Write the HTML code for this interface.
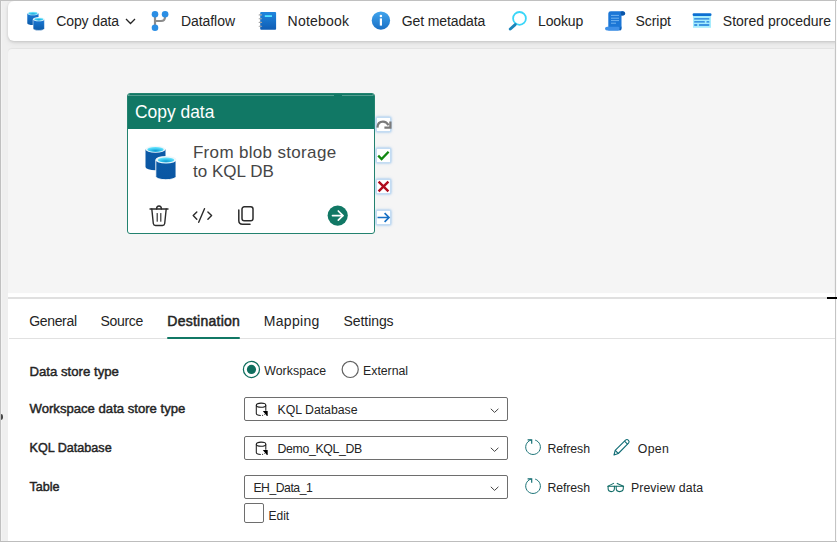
<!DOCTYPE html>
<html><head><meta charset="utf-8"><style>
html,body{margin:0;padding:0;width:837px;height:542px;overflow:hidden;background:#fff;font-family:"Liberation Sans", sans-serif;}
.t{position:absolute;white-space:nowrap;line-height:1;font-family:"Liberation Sans", sans-serif;}
svg{overflow:visible}
</style></head><body>
<div style="position:absolute;left:0px;top:0px;width:837px;height:542px;background:#efefef"></div>
<div style="position:absolute;left:1px;top:0px;width:1px;height:542px;background:#f4f4f4"></div>
<div style="position:absolute;left:8px;top:293px;width:829px;height:249px;background:#ffffff"></div>
<div style="position:absolute;left:8px;top:1px;width:840px;height:40px;background:#fff;border-radius:6px;box-shadow:0 1px 3px rgba(0,0,0,0.15),0 3px 6px rgba(0,0,0,0.05)"></div>
<div style="position:absolute;left:8px;top:49px;width:826px;height:244px;background:#f5f5f5;border-radius:4px 0 0 0;box-shadow:0 -0.5px 1px rgba(0,0,0,0.05)"></div>
<div style="position:absolute;left:8px;top:297px;width:829px;height:2px;background:#e0e0e0"></div>
<div style="position:absolute;left:9px;top:338px;width:826px;height:1px;background:#e1e1e1"></div>
<div style="position:absolute;left:0px;top:0px;width:837px;height:1px;background:#c0c0c0"></div>
<div style="position:absolute;left:0px;top:0px;width:1px;height:542px;background:#c0c0c0"></div>
<div style="position:absolute;left:835px;top:0px;width:1px;height:542px;background:#c4c4c4"></div>
<div style="position:absolute;left:836px;top:1px;width:1px;height:541px;background:#fafafa"></div>
<div style="position:absolute;left:0px;top:541px;width:837px;height:1px;background:#bdbdbd"></div>
<div style="position:absolute;left:1px;top:413.8px;width:2.4px;height:6.4px;background:#474747;border-radius:0 3px 3px 0/0 3.2px 3.2px 0"></div>
<div style="position:absolute;left:827px;top:297px;width:10px;height:2px;background:#000"></div>
<svg style="position:absolute;left:27px;top:11px;" width="18" height="20" viewBox="0 0 32 35"><defs><linearGradient id="cba" x1="0" y1="0" x2="0" y2="1"><stop offset="0" stop-color="#1a7ad8"/><stop offset="1" stop-color="#0b5aa8"/></linearGradient>
<radialGradient id="cya" cx="0.5" cy="0.75" r="0.6"><stop offset="0" stop-color="#1597cf"/><stop offset="0.55" stop-color="#35c4ee"/><stop offset="1" stop-color="#5fe0fb"/></radialGradient></defs>
<path d="M0.5 3.8 V21.5 A10 3.2 0 0 0 20.5 21.5 V3.8 Z" fill="url(#cba)"/>
<ellipse cx="10.5" cy="3.8" rx="10.1" ry="3.5" fill="#eef7fb"/>
<ellipse cx="10.5" cy="4" rx="8.2" ry="2.5" fill="url(#cya)"/>
<path d="M10.8 14.3 V31 A10 3.2 0 0 0 31 31 V14.3 Z" fill="url(#cba)" stroke="#fff" stroke-width="0.9"/>
<ellipse cx="21" cy="14.3" rx="10.5" ry="3.8" fill="#eef7fb"/>
<ellipse cx="21" cy="14.5" rx="8.2" ry="2.5" fill="url(#cya)"/></svg>
<div class="t" style="left:56.30px;top:13.95px;font-size:14px;font-weight:400;color:#242424;letter-spacing:-0.12px;">Copy data</div>
<svg style="position:absolute;left:125px;top:18px;" width="11" height="7" viewBox="0 0 11 7"><path d="M1 1 L5.5 5.5 L10 1" fill="none" stroke="#242424" stroke-width="1.3"/></svg>
<svg style="position:absolute;left:150px;top:10px;" width="20" height="22" viewBox="0 0 20 22"><path d="M5 4.5 V17.5" stroke="#8c8c8c" stroke-width="2.2" fill="none"/>
<path d="M15 4.5 V7 Q15 11 11 11 H5" stroke="#8c8c8c" stroke-width="2.2" fill="none"/>
<circle cx="5" cy="4.3" r="3.3" fill="#2b8ee4"/><circle cx="15.1" cy="4.3" r="3.3" fill="#2b8ee4"/><circle cx="5" cy="17.7" r="3.3" fill="#2b8ee4"/></svg>
<div class="t" style="left:180.90px;top:13.95px;font-size:14px;font-weight:400;color:#242424;letter-spacing:-0.05px;">Dataflow</div>
<svg style="position:absolute;left:258px;top:11px;" width="20" height="20" viewBox="0 0 20 20"><defs><linearGradient id="nb" x1="0" y1="0" x2="0" y2="1"><stop offset="0" stop-color="#1f86de"/><stop offset="1" stop-color="#0f5db5"/></linearGradient></defs>
<rect x="2.2" y="1" width="15.9" height="17.7" rx="1" fill="url(#nb)"/>
<rect x="6.8" y="4.2" width="7.2" height="1.8" fill="#54e3ff"/>
<g fill="none" stroke="#a5a5a5" stroke-width="1.1" stroke-linecap="round"><path d="M1.2 3.9 H3.6"/><path d="M1.2 7.7 H3.6"/><path d="M1.2 11.4 H3.6"/><path d="M1.2 15.2 H3.6"/></g></svg>
<div class="t" style="left:287.60px;top:13.95px;font-size:14px;font-weight:400;color:#242424;letter-spacing:0.2px;">Notebook</div>
<svg style="position:absolute;left:371px;top:11px;" width="20" height="20" viewBox="0 0 20 20"><defs><linearGradient id="inf" x1="0" y1="0" x2="0" y2="1"><stop offset="0" stop-color="#41a5ee"/><stop offset="1" stop-color="#1a6fc4"/></linearGradient></defs>
<circle cx="9.9" cy="9.6" r="9.2" fill="url(#inf)"/><circle cx="9.9" cy="5" r="1.3" fill="#fff"/><rect x="8.8" y="7.4" width="2.2" height="7.2" fill="#fff"/></svg>
<div class="t" style="left:401.80px;top:13.95px;font-size:14px;font-weight:400;color:#242424;letter-spacing:-0.12px;">Get metadata</div>
<svg style="position:absolute;left:507px;top:9px;" width="22" height="22" viewBox="0 0 22 22"><circle cx="12.5" cy="9.4" r="6.4" fill="none" stroke="#3ad6f8" stroke-width="1.8"/>
<path d="M3.3 20 L8.2 15.6" stroke="#1c86bb" stroke-width="3" stroke-linecap="round"/></svg>
<div class="t" style="left:538.00px;top:13.95px;font-size:14px;font-weight:400;color:#242424;letter-spacing:-0.15px;">Lookup</div>
<svg style="position:absolute;left:604px;top:10px;" width="22" height="22" viewBox="0 0 22 22"><path d="M4.3 3.6 Q4.3 1.2 6.8 1.2 H18.5 Q21 1.2 21 3.6 Q21 5.4 19 5.4 H17.5 V17 Q17.5 20.5 14 20.5 H4.3 Z" fill="#1b76d6"/>
<path d="M16.5 2 Q17.3 1.2 18.8 1.2 Q21.2 1.4 21.2 3.4 Q21.2 5.4 19 5.4 H17.3 Z" fill="#0a55a8"/>
<path d="M1 18.6 Q1 16.8 3.2 16.8 H14.2 Q15.8 16.8 15.8 18.6 Q15.8 20.6 14 20.6 H3 Q1 20.6 1 18.6 Z" fill="#3f90e8"/>
<path d="M15.8 17.5 Q17.5 17.5 17.5 16 V19 Q17.5 20.6 15.5 20.6 Z" fill="#0d5fb8"/>
<g stroke="#7cbaf3" stroke-width="0.9"><path d="M7 5.4 H15"/><path d="M7 8.2 H15"/><path d="M7 10.6 H15"/><path d="M7 13.2 H12"/></g></svg>
<div class="t" style="left:635.60px;top:13.95px;font-size:14px;font-weight:400;color:#242424;letter-spacing:-0.08px;">Script</div>
<svg style="position:absolute;left:692px;top:12px;" width="20" height="16" viewBox="0 0 20 16"><rect x="1" y="2" width="18" height="13.8" fill="#a6ecfd"/>
<rect x="0.6" y="1.3" width="18.9" height="2.8" rx="1.3" fill="#0b6fd2"/>
<g stroke="#1a78d8" stroke-width="1.3" stroke-linecap="round"><path d="M2.7 6.9 H16.8"/><path d="M2.7 9.9 H12.3 M15 9.9 H16.8"/><path d="M2.7 13 H4.8 M7.4 13 H16.8"/></g></svg>
<div class="t" style="left:722.80px;top:13.95px;font-size:14px;font-weight:400;color:#242424;letter-spacing:0px;">Stored procedure</div>
<div style="position:absolute;left:127px;top:93px;width:248px;height:141px;box-sizing:border-box;border:1.5px solid #23826f;border-radius:3px;background:#fff;overflow:hidden"></div>
<div style="position:absolute;left:128px;top:94px;width:246px;height:34.5px;background:#117865;border-radius:2px 2px 0 0"></div>
<div style="position:absolute;left:128px;top:94.6px;width:206px;height:0.8px;background:rgba(255,255,255,0.28)"></div>
<div style="position:absolute;left:342px;top:94.6px;width:31px;height:0.8px;background:rgba(255,255,255,0.28)"></div>
<div class="t" style="left:134.90px;top:103.74px;font-size:17.44px;font-weight:400;color:#ffffff;letter-spacing:0px;">Copy data</div>
<svg style="position:absolute;left:145px;top:144.6px;" width="32" height="36" viewBox="0 0 32 35"><defs><linearGradient id="cbb" x1="0" y1="0" x2="0" y2="1"><stop offset="0" stop-color="#0b5aa8"/><stop offset="1" stop-color="#0a56a2"/></linearGradient>
<radialGradient id="cyb" cx="0.5" cy="0.75" r="0.6"><stop offset="0" stop-color="#1597cf"/><stop offset="0.55" stop-color="#35c4ee"/><stop offset="1" stop-color="#5fe0fb"/></radialGradient></defs>
<path d="M0.5 3.8 V21.5 A10 3.2 0 0 0 20.5 21.5 V3.8 Z" fill="url(#cbb)"/>
<ellipse cx="10.5" cy="3.8" rx="10.1" ry="3.5" fill="#eef7fb"/>
<ellipse cx="10.5" cy="4" rx="8.2" ry="2.5" fill="url(#cyb)"/>
<path d="M10.8 14.3 V31 A10 3.2 0 0 0 31 31 V14.3 Z" fill="url(#cbb)" stroke="#fff" stroke-width="0.9"/>
<ellipse cx="21" cy="14.3" rx="10.5" ry="3.8" fill="#eef7fb"/>
<ellipse cx="21" cy="14.5" rx="8.2" ry="2.5" fill="url(#cyb)"/></svg>
<div class="t" style="left:192.90px;top:143.71px;font-size:17.0px;font-weight:400;color:#464646;letter-spacing:0.33px;">From blob storage</div>
<div class="t" style="left:192.90px;top:163.11px;font-size:17.0px;font-weight:400;color:#464646;letter-spacing:0.05px;">to KQL DB</div>
<svg style="position:absolute;left:148px;top:204px;" width="22" height="23" viewBox="0 0 22 23"><g fill="none" stroke="#2b2b2b" stroke-width="1.4" stroke-linecap="round" stroke-linejoin="round">
<path d="M2 5 H20"/><path d="M8.6 5 Q8.6 2 11 2 Q13.4 2 13.4 5"/><path d="M3.8 5 L5.3 19.5 Q5.6 21.5 7.5 21.5 H14.5 Q16.4 21.5 16.7 19.5 L18.2 5"/>
<path d="M9.2 9.6 V17.2" stroke-width="1.15"/><path d="M12.8 9.6 V17.2" stroke-width="1.15"/></g></svg>
<svg style="position:absolute;left:191px;top:207px;" width="23" height="18" viewBox="0 0 23 18"><g fill="none" stroke="#2b2b2b" stroke-width="1.4" stroke-linecap="round" stroke-linejoin="round">
<path d="M5.8 4.9 L2.2 8.6 L5.8 12.3"/><path d="M16.9 4.9 L20.6 8.6 L16.9 12.3"/><path d="M13.5 1.7 L7.7 15.3"/></g></svg>
<svg style="position:absolute;left:235px;top:203px;" width="22" height="25" viewBox="0 0 22 25"><g fill="none" stroke="#2b2b2b" stroke-width="1.5" stroke-linecap="round" stroke-linejoin="round">
<rect x="7" y="3.8" width="11" height="14" rx="2.3"/><path d="M3.8 7 V17.5 Q3.8 21.2 7.5 21.2 H15"/></g></svg>
<svg style="position:absolute;left:327px;top:205px;" width="22" height="22" viewBox="0 0 22 22"><circle cx="10.7" cy="10.6" r="10.1" fill="#117865"/>
<g fill="none" stroke="#fff" stroke-width="1.7" stroke-linecap="round" stroke-linejoin="round"><path d="M5.5 10.6 H15.8"/><path d="M11.3 6 L15.9 10.6 L11.3 15.2"/></g></svg>
<div style="position:absolute;left:376px;top:117px;width:15px;height:15px;box-sizing:border-box;background:#fff;border:1px solid #c3dcf3;box-shadow:0 0 2.5px rgba(90,160,230,0.75)"></div>
<div style="position:absolute;left:376px;top:148px;width:15px;height:15px;box-sizing:border-box;background:#fff;border:1px solid #c3dcf3;box-shadow:0 0 2.5px rgba(90,160,230,0.75)"></div>
<div style="position:absolute;left:376px;top:179px;width:15px;height:15px;box-sizing:border-box;background:#fff;border:1px solid #c3dcf3;box-shadow:0 0 2.5px rgba(90,160,230,0.75)"></div>
<div style="position:absolute;left:376px;top:210px;width:15px;height:15px;box-sizing:border-box;background:#fff;border:1px solid #c3dcf3;box-shadow:0 0 2.5px rgba(90,160,230,0.75)"></div>
<svg style="position:absolute;left:376px;top:117px;" width="16" height="15" viewBox="0 0 16 15"><path d="M1.4 10.6 Q1.6 4.6 7 4.6 Q10.5 4.6 12.6 8.3" fill="none" stroke="#7b7b7b" stroke-width="2.3"/><path d="M8.4 10.6 L14.4 10.6 L14.4 4.4" fill="none" stroke="#7b7b7b" stroke-width="2.3" stroke-linejoin="miter"/></svg>
<svg style="position:absolute;left:376px;top:148px;" width="15" height="15" viewBox="0 0 15 15"><path d="M2.2 7.6 L5.6 11 L12.6 3.8" fill="none" stroke="#118711" stroke-width="2.3"/></svg>
<svg style="position:absolute;left:376px;top:179px;" width="15" height="15" viewBox="0 0 15 15"><path d="M2.6 2.6 L12.4 12.4 M12.4 2.6 L2.6 12.4" fill="none" stroke="#b00d1e" stroke-width="2.4"/></svg>
<svg style="position:absolute;left:376px;top:210px;" width="15" height="15" viewBox="0 0 15 15"><path d="M1.5 7.5 H13 M8.6 3.1 L13 7.5 L8.6 11.9" fill="none" stroke="#1770c4" stroke-width="1.7"/></svg>
<div class="t" style="left:29.20px;top:313.95px;font-size:14px;font-weight:400;color:#242424;letter-spacing:-0.33px;">General</div>
<div class="t" style="left:100.60px;top:313.95px;font-size:14px;font-weight:400;color:#242424;letter-spacing:-0.33px;">Source</div>
<div class="t" style="left:167.30px;top:313.95px;font-size:14px;font-weight:400;color:#242424;letter-spacing:0.25px;-webkit-text-stroke:0.5px #242424;">Destination</div>
<div style="position:absolute;left:167px;top:336.8px;width:73px;height:2.2px;background:#117865;border-radius:1px"></div>
<div class="t" style="left:263.80px;top:313.95px;font-size:14px;font-weight:400;color:#242424;letter-spacing:0.3px;">Mapping</div>
<div class="t" style="left:343.60px;top:313.95px;font-size:14px;font-weight:400;color:#242424;letter-spacing:-0.08px;">Settings</div>
<div class="t" style="left:29.50px;top:365.03px;font-size:13.2px;font-weight:400;color:#242424;letter-spacing:0px;-webkit-text-stroke:0.45px #242424;">Data store type</div>
<div class="t" style="left:29.50px;top:402.28px;font-size:13.14px;font-weight:400;color:#242424;letter-spacing:0px;-webkit-text-stroke:0.45px #242424;">Workspace data store type</div>
<div class="t" style="left:29.50px;top:442.33px;font-size:12.6px;font-weight:400;color:#242424;letter-spacing:0px;-webkit-text-stroke:0.45px #242424;">KQL Database</div>
<div class="t" style="left:29.50px;top:480.93px;font-size:12.6px;font-weight:400;color:#242424;letter-spacing:0px;-webkit-text-stroke:0.45px #242424;">Table</div>
<svg style="position:absolute;left:242px;top:360px;" width="19" height="19" viewBox="0 0 19 19"><circle cx="9.45" cy="9.45" r="8.05" fill="none" stroke="#0f6e5e" stroke-width="1.25"/><circle cx="9.45" cy="9.45" r="4.6" fill="#0f6e5e"/></svg>
<div class="t" style="left:264.30px;top:365.19px;font-size:12.3px;font-weight:400;color:#242424;letter-spacing:0.05px;">Workspace</div>
<svg style="position:absolute;left:341px;top:360px;" width="19" height="19" viewBox="0 0 19 19"><circle cx="9.2" cy="9.45" r="8.05" fill="none" stroke="#616161" stroke-width="1.2"/></svg>
<div class="t" style="left:363.10px;top:365.19px;font-size:12.3px;font-weight:400;color:#242424;letter-spacing:-0.02px;">External</div>
<div style="position:absolute;left:244px;top:397px;width:264px;height:24px;box-sizing:border-box;border:1px solid #6e6e6e;border-radius:2px"></div>
<svg style="position:absolute;left:255px;top:401.8px;" width="14" height="15" viewBox="0 0 14 15"><g fill="none" stroke="#1e1e1e" stroke-width="1.05"><path d="M1.3 3.2 V11.6 Q1.3 13.4 5.8 13.5"/><path d="M10.8 3.2 V8.8"/><path d="M1.3 3.2 Q1.3 1.1 6.05 1.1 Q10.8 1.1 10.8 3.2 Q10.8 5.2 6.05 5.2 Q1.3 5.2 1.3 3.2"/></g><path d="M7.8 9 L12.7 9 L12.7 13.9 L11.9 13.9 Z" fill="#000"/><circle cx="7.6" cy="13.3" r="0.6" fill="#333"/><circle cx="9.6" cy="12.4" r="0.5" fill="#555"/></svg>
<svg style="position:absolute;left:489.5px;top:407.5px;" width="9.5" height="5.5" viewBox="0 0 9.5 5.5"><path d="M0.8 0.8 L4.6 4.4 L8.4 0.8" fill="none" stroke="#424242" stroke-width="1"/></svg>
<div style="position:absolute;left:244px;top:436px;width:264px;height:24px;box-sizing:border-box;border:1px solid #6e6e6e;border-radius:2px"></div>
<svg style="position:absolute;left:255px;top:440.8px;" width="14" height="15" viewBox="0 0 14 15"><g fill="none" stroke="#1e1e1e" stroke-width="1.05"><path d="M1.3 3.2 V11.6 Q1.3 13.4 5.8 13.5"/><path d="M10.8 3.2 V8.8"/><path d="M1.3 3.2 Q1.3 1.1 6.05 1.1 Q10.8 1.1 10.8 3.2 Q10.8 5.2 6.05 5.2 Q1.3 5.2 1.3 3.2"/></g><path d="M7.8 9 L12.7 9 L12.7 13.9 L11.9 13.9 Z" fill="#000"/><circle cx="7.6" cy="13.3" r="0.6" fill="#333"/><circle cx="9.6" cy="12.4" r="0.5" fill="#555"/></svg>
<svg style="position:absolute;left:489.5px;top:446.5px;" width="9.5" height="5.5" viewBox="0 0 9.5 5.5"><path d="M0.8 0.8 L4.6 4.4 L8.4 0.8" fill="none" stroke="#424242" stroke-width="1"/></svg>
<div class="t" style="left:277.60px;top:403.99px;font-size:12.3px;font-weight:400;color:#242424;letter-spacing:-0.03px;">KQL Database</div>
<div class="t" style="left:277.60px;top:442.79px;font-size:12.3px;font-weight:400;color:#242424;letter-spacing:-0.36px;">Demo_KQL_DB</div>
<div style="position:absolute;left:244px;top:475px;width:264px;height:24px;box-sizing:border-box;border:1px solid #6e6e6e;border-radius:2px"></div>
<svg style="position:absolute;left:489.5px;top:485.5px;" width="9.5" height="5.5" viewBox="0 0 9.5 5.5"><path d="M0.8 0.8 L4.6 4.4 L8.4 0.8" fill="none" stroke="#424242" stroke-width="1"/></svg>
<div class="t" style="left:253.40px;top:482.17px;font-size:12.2px;font-weight:400;color:#242424;letter-spacing:-0.45px;">EH_Data_1</div>
<div style="position:absolute;left:244px;top:503px;width:20px;height:20px;box-sizing:border-box;border:1px solid #6e6e6e;border-radius:2px"></div>
<div class="t" style="left:268.50px;top:509.74px;font-size:12.0px;font-weight:400;color:#242424;letter-spacing:0px;">Edit</div>
<svg style="position:absolute;left:525px;top:438.5px;" width="17" height="16" viewBox="0 0 17 16"><path d="M10.2 1.1 A7.35 7.35 0 1 1 5.9 1.1" fill="none" stroke="#0f6b70" stroke-width="0.95"/><path d="M2.6 0.9 L6.7 0.9 L6.7 4.7" fill="none" stroke="#0f6b70" stroke-width="1.15" stroke-linejoin="miter"/></svg>
<div class="t" style="left:547.40px;top:442.99px;font-size:12.3px;font-weight:400;color:#242424;letter-spacing:-0.08px;">Refresh</div>
<svg style="position:absolute;left:525px;top:477.5px;" width="17" height="16" viewBox="0 0 17 16"><path d="M10.2 1.1 A7.35 7.35 0 1 1 5.9 1.1" fill="none" stroke="#0f6b70" stroke-width="0.95"/><path d="M2.6 0.9 L6.7 0.9 L6.7 4.7" fill="none" stroke="#0f6b70" stroke-width="1.15" stroke-linejoin="miter"/></svg>
<div class="t" style="left:547.40px;top:481.99px;font-size:12.3px;font-weight:400;color:#242424;letter-spacing:-0.08px;">Refresh</div>
<svg style="position:absolute;left:612px;top:437.5px;" width="19" height="19" viewBox="0 0 19 19"><g fill="none" stroke="#0f6c74" stroke-width="1.1" stroke-linejoin="round"><path d="M2 17 L3.2 12.4 L13.5 2.1 Q15 0.8 16.5 2.3 Q17.8 3.8 16.5 5.2 L6.3 15.5 Z"/><path d="M12.5 3.2 L15.5 6.2"/><path d="M3.2 12.4 L6.3 15.5"/></g></svg>
<div class="t" style="left:637.80px;top:442.99px;font-size:12.3px;font-weight:400;color:#242424;letter-spacing:0.3px;">Open</div>
<svg style="position:absolute;left:606px;top:481px;" width="19" height="12" viewBox="0 0 19 12"><g fill="none" stroke="#0f6b66" stroke-width="1.05" stroke-linejoin="round" stroke-linecap="round"><path d="M1.8 5.3 H17.6"/><path d="M2.1 5.3 V7.6 Q2.1 10.6 5.2 10.6 Q8.4 10.6 8.4 7.6 V5.3"/><path d="M10.2 5.3 V7.6 Q10.2 10.6 13.5 10.6 Q17.3 10.6 17.3 7.6 V5.3"/><path d="M2.6 4.9 L7.6 2.4"/><path d="M16.9 4.9 L11.2 2.4"/></g></svg>
<div class="t" style="left:630.90px;top:481.99px;font-size:12.3px;font-weight:400;color:#242424;letter-spacing:0.1px;">Preview data</div>
</body></html>
